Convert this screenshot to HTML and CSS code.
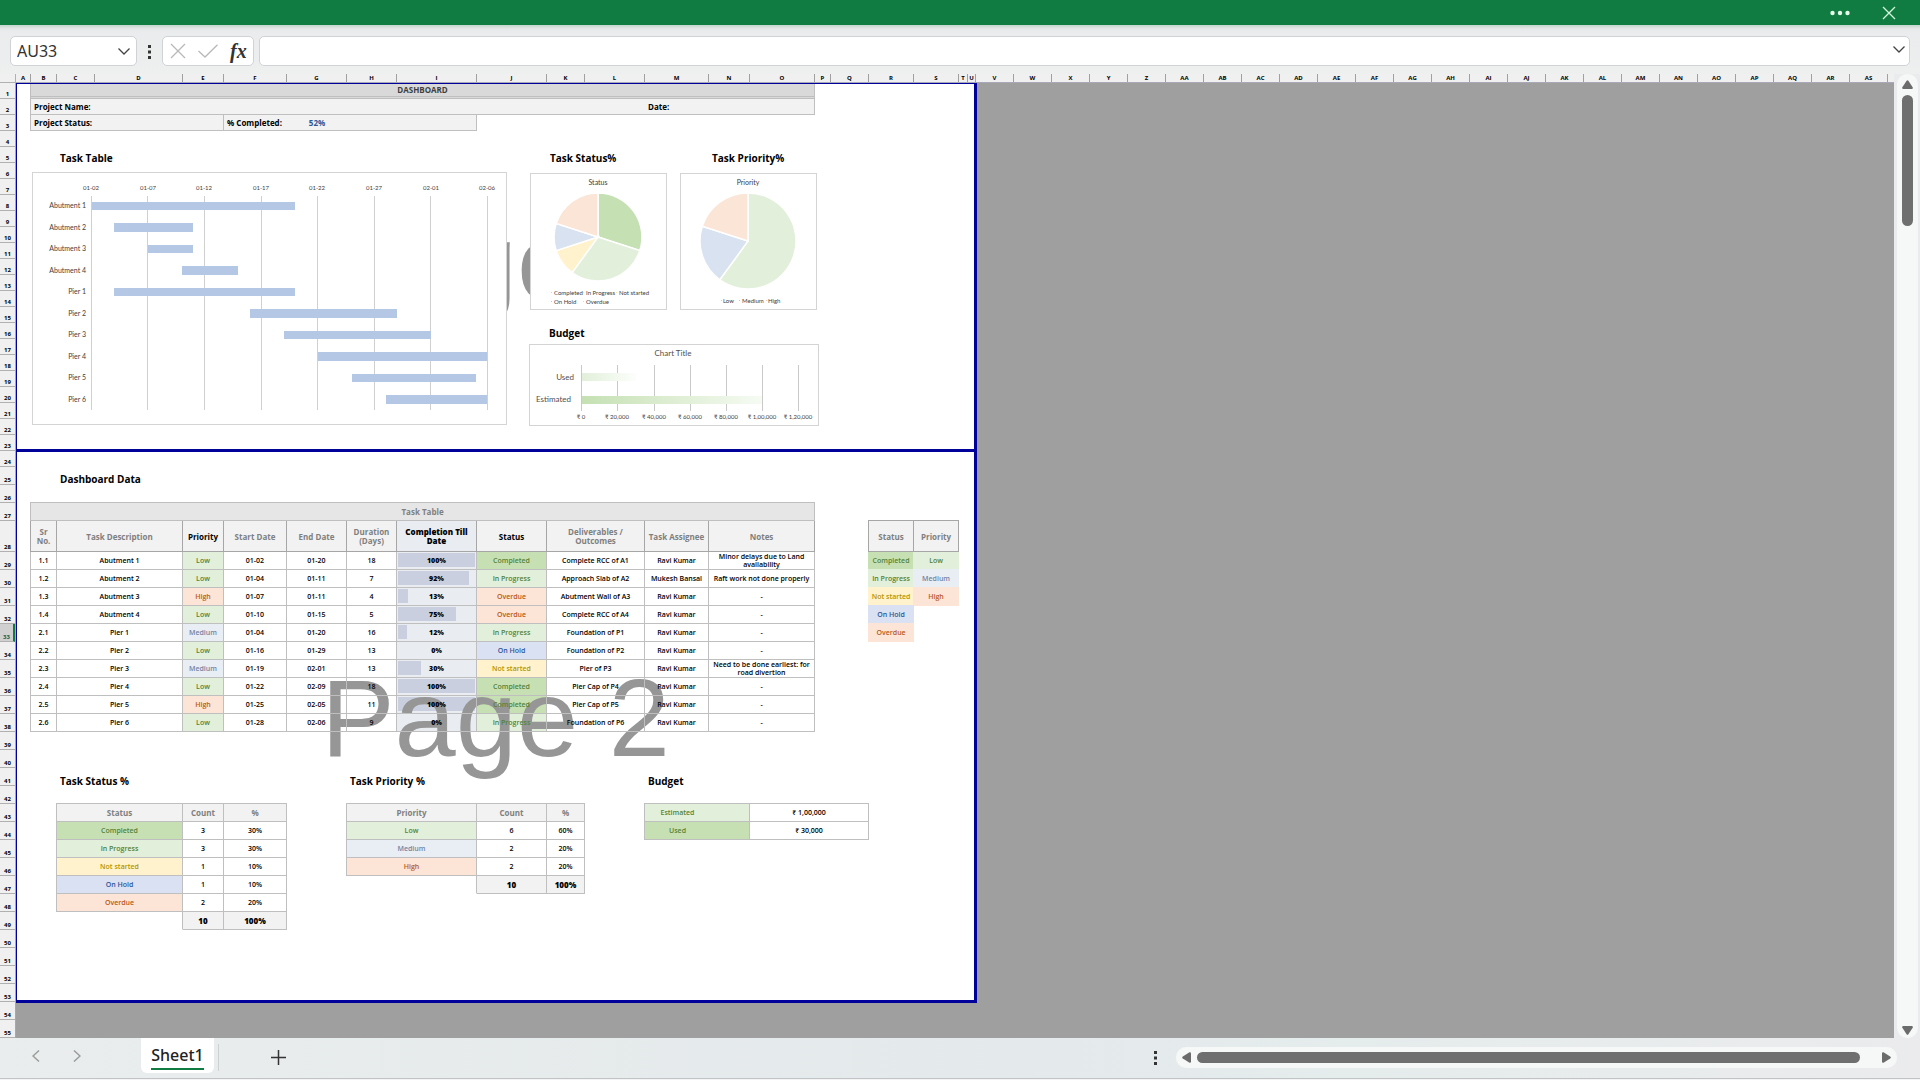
FILE: index.html
```html
<!DOCTYPE html>
<html lang="en">
<head>
    <meta charset="UTF-8">
    <meta name="viewport" content="width=device-width, initial-scale=1.0">
    <title>Project Dashboard</title>
    <link rel="stylesheet" href="styles.css">
</head>
<body>
    <header class="title-bar">
        <button aria-label="More options">
            <svg width="20" height="6" viewBox="0 0 20 6" fill="#e4fbe9"><circle cx="2.5" cy="3" r="2.2"/><circle cx="10" cy="3" r="2.2"/><circle cx="17.500" cy="3" r="2.2"/></svg>
        </button>
        <button aria-label="Close">
            <svg width="14" height="14" viewBox="0 0 14 14" fill="none" stroke="#d5f7df" stroke-width="1.3"><path d="M1 1l12 12M13 1L1 13"/></svg>
        </button>
    </header>

    <!-- Formula bar -->
    <div class="formula-bar">
        <div class="box name-box">
            <input type="text" value="AU33" aria-label="Name box">
            <button aria-label="Open name list">
                <svg width="12" height="7" viewBox="0 0 12 7" fill="none" stroke="#444" stroke-width="1.3"><path d="M.5.5L6 6 11.500.5"/></svg>
            </button>
        </div>
        <svg class="grip" width="4" height="14" viewBox="0 0 4 14" fill="#333"><path d="M0 0h3v3H0zM0 5.500h3v3H0zM0 11h3v3H0z"/></svg>
        <div class="box fx-box">
            <button aria-label="Cancel">
                <svg width="16" height="16" viewBox="0 0 16 16" fill="none" stroke="#b9b9b9" stroke-width="1.3"><path d="M1 1l14 14M15 1L1 15"/></svg>
            </button>
            <button aria-label="Enter">
                <svg width="20" height="14" viewBox="0 0 20 14" fill="none" stroke="#b9b9b9" stroke-width="1.300"><path d="M.5 7L7 13 19.500.8"/></svg>
            </button>
            <button class="fx" aria-label="Insert function">fx</button>
        </div>
        <div class="box formula-box">
            <input type="text" value="" aria-label="Formula">
            <button aria-label="Expand formula bar">
                <svg width="12" height="7" viewBox="0 0 12 7" fill="none" stroke="#444" stroke-width="1.3"><path d="M.5.5L6 6 11.500.5"/></svg>
            </button>
        </div>
    </div>

    <main class="workspace">
        <div class="sheet">
            <div class="corner"></div>
            <div class="col-heads" id="col-heads"></div>
            <div class="row-heads" id="row-heads"></div>

            <div class="canvas">
                <!-- Page 1: dashboard -->
                <section class="page page-one">
                    <div class="watermark">Page 1</div>
                    <table class="banner">
                        <colgroup><col style="width:194px"><col style="width:63px"><col style="width:60px"><col style="width:130px"><col style="width:168px"><col style="width:170px"></colgroup>
                        <tr><th colspan="6" class="banner-title">DASHBOARD</th></tr>
                        <tr><th colspan="5" class="open">Project Name:</th><th>Date:</th></tr>
                        <tr><th>Project Status:</th><th class="open">% Completed:</th><td class="open percent">52%</td><td></td></tr>
                    </table>

                    <div class="charts">
                        <div class="chart-col">
                            <h2 class="in-28">Task Table</h2>
                            <svg class="chart" width="475" height="253" viewBox="0 0 475 253">
                                <g fill="#d0d0d0">
                                    <path d="M59 24h1v214h-1zM115 24h1v214h-1zM172 24h1v214h-1zM229 24h1v214h-1zM285 24h1v214h-1zM342 24h1v214h-1zM398 24h1v214h-1zM455 24h1v214h-1z"/>
                                </g>
                                <g fill="#b4c7e4">
                                    <path d="M60 30h203v8H60zM82 51h79v9H82zM116 73h45v8h-45zM150 94h56v9h-56zM82 116h181v8H82zM218 137h147v9H218zM252 159h147v8H252zM286 180h169v9H286zM320 202h124v8H320zM354 223h101v9H354z"/>
                                </g>
                                <g class="axis" text-anchor="middle">
                                    <text x="59" y="18">01-02</text><text x="116" y="18">01-07</text><text x="172" y="18">01-12</text><text x="229" y="18">01-17</text><text x="285" y="18">01-22</text><text x="342" y="18">01-27</text><text x="399" y="18">02-01</text><text x="455" y="18">02-06</text>
                                </g>
                                <g class="axis cat" text-anchor="end">
                                    <text x="54" y="36">Abutment 1</text><text x="54" y="58">Abutment 2</text><text x="54" y="79">Abutment 3</text><text x="54" y="101">Abutment 4</text><text x="54" y="122">Pier 1</text><text x="54" y="144">Pier 2</text><text x="54" y="165">Pier 3</text><text x="54" y="187">Pier 4</text><text x="54" y="208">Pier 5</text><text x="54" y="230">Pier 6</text>
                                </g>
                            </svg>
                        </div>

                        <div class="chart-col">
                            <div class="pies">
                                <div>
                                    <h2 class="in-20">Task Status%</h2>
                                    <svg class="chart" width="137" height="137" viewBox="0 0 137 137">
                                        <text class="axis cat" x="68" y="12" text-anchor="middle">Status</text>
                                        <g transform="translate(68 64)" stroke="#fff" stroke-width="1.500">
                                            <path fill="#c5e0b3" d="M0 0V-44A44 44 0 0 1 41.800 13.600z"/>
                                            <path fill="#e2efda" d="M0 0L41.800 13.600A44 44 0 0 1-25.900 35.600z"/>
                                            <path fill="#fff2cc" d="M0 0L-25.900 35.600A44 44 0 0 1-41.800 13.600z"/>
                                            <path fill="#d9e2f1" d="M0 0L-41.800 13.600A44 44 0 0 1-41.800-13.600z"/>
                                            <path fill="#fbe5d7" d="M0 0L-41.800-13.600A44 44 0 0 1 0-44z"/>
                                        </g>
                                        <path fill="#c5e0b3" d="M21 119h1v1h-1z"/><path fill="#e2efda" d="M53 119h1v1h-1z"/><path fill="#ffe699" d="M86 119h1v1h-1z"/><path fill="#b4c7e4" d="M21 128h1v1h-1z"/><path fill="#f8cbad" d="M53 128h1v1h-1z"/>
                                        <g class="axis">
                                            <text x="24" y="122">Completed</text><text x="56" y="122">In Progress</text><text x="89" y="122">Not started</text><text x="24" y="131">On Hold</text><text x="56" y="131">Overdue</text>
                                        </g>
                                    </svg>
                                </div>
                                <div>
                                    <h2 class="in-32">Task Priority%</h2>
                                    <svg class="chart" width="137" height="137" viewBox="0 0 137 137">
                                        <text class="axis cat" x="68" y="12" text-anchor="middle">Priority</text>
                                        <g transform="translate(68 68)" stroke="#fff" stroke-width="1.500">
                                            <path fill="#e2efda" d="M0 0V-48A48 48 0 1 1-28.200 38.800z"/>
                                            <path fill="#d9e2f1" d="M0 0L-28.200 38.800A48 48 0 0 1-45.700-14.800z"/>
                                            <path fill="#fbe5d7" d="M0 0L-45.700-14.800A48 48 0 0 1 0-48z"/>
                                        </g>
                                        <path fill="#c5e0b3" d="M41 127h1v1h-1z"/><path fill="#b4c7e4" d="M59 127h1v1h-1z"/><path fill="#f8cbad" d="M86 127h1v1h-1z"/>
                                        <g class="axis">
                                            <text x="43" y="130">Low</text><text x="62" y="130">Medium</text><text x="88" y="130">High</text>
                                        </g>
                                    </svg>
                                </div>
                            </div>
                            <h2 class="in-20 budget-title">Budget</h2>
                            <svg class="chart" width="290" height="82" viewBox="0 0 290 82">
                                <defs>
                                    <linearGradient id="used"><stop offset="0" stop-color="#e2efda"/><stop offset="1" stop-color="#fcfefb"/></linearGradient>
                                    <linearGradient id="estimated"><stop offset="0" stop-color="#c5e0b3"/><stop offset="1" stop-color="#f6fbf3"/></linearGradient>
                                </defs>
                                <path fill="#c9c9c9" d="M52 21h1v46h-1zM88 21h1v46h-1zM125 21h1v46h-1zM161 21h1v46h-1zM197 21h1v46h-1zM233 21h1v46h-1zM269 21h1v46h-1z"/>
                                <path fill="url(#used)" d="M53 29h54v8H53z"/>
                                <path fill="url(#estimated)" d="M53 52h180v8H53z"/>
                                <g class="label">
                                    <text x="144" y="12" text-anchor="middle">Chart Title</text>
                                    <text x="45" y="36" text-anchor="end">Used</text>
                                    <text x="42" y="58" text-anchor="end">Estimated</text>
                                </g>
                                <g class="axis" text-anchor="middle">
                                    <text x="52" y="75">₹ 0</text><text x="88" y="75">₹ 20,000</text><text x="125" y="75">₹ 40,000</text><text x="161" y="75">₹ 60,000</text><text x="197" y="75">₹ 80,000</text><text x="233" y="75">₹ 1,00,000</text><text x="269" y="75">₹ 1,20,000</text>
                                </g>
                            </svg>
                        </div>
                    </div>
                </section>

                <!-- Page 2: source data -->
                <section class="page page-two">
                    <div class="watermark">Page 2</div>
                    <h2 class="data-title">Dashboard Data</h2>

                    <div class="data-row">
                        <table class="data">
                            <colgroup><col style="width:27px"><col style="width:126px"><col style="width:41px"><col style="width:63px"><col style="width:60px"><col style="width:50px"><col style="width:80px"><col style="width:70px"><col style="width:98px"><col style="width:64px"><col style="width:106px"></colgroup>
                            <thead>
                                <tr><th colspan="11" class="caption">Task Table</th></tr>
                                <tr class="tall"><th>Sr<br>No.</th><th>Task Description</th><th class="strong">Priority</th><th>Start Date</th><th>End Date</th><th>Duration<br>(Days)</th><th class="strong done">Completion Till Date</th><th class="strong">Status</th><th>Deliverables /<br>Outcomes</th><th>Task Assignee</th><th>Notes</th></tr>
                            </thead>
                            <tbody>
                                <tr><td>1.1</td><td>Abutment 1</td><td class="low">Low</td><td>01-02</td><td>01-20</td><td>18</td><td class="done"><i class="bar" style="--value:100"></i>100%</td><td class="completed">Completed</td><td>Complete RCC of A1</td><td>Ravi Kumar</td><td>Minor delays due to Land availability</td></tr>
                                <tr><td>1.2</td><td>Abutment 2</td><td class="low">Low</td><td>01-04</td><td>01-11</td><td>7</td><td class="done"><i class="bar" style="--value:92"></i>92%</td><td class="progress">In Progress</td><td>Approach Slab of A2</td><td>Mukesh Bansal</td><td>Raft work not done properly</td></tr>
                                <tr><td>1.3</td><td>Abutment 3</td><td class="high">High</td><td>01-07</td><td>01-11</td><td>4</td><td class="done"><i class="bar" style="--value:13"></i>13%</td><td class="overdue">Overdue</td><td>Abutment Wall of A3</td><td>Ravi Kumar</td><td>-</td></tr>
                                <tr><td>1.4</td><td>Abutment 4</td><td class="low">Low</td><td>01-10</td><td>01-15</td><td>5</td><td class="done"><i class="bar" style="--value:75"></i>75%</td><td class="overdue">Overdue</td><td>Complete RCC of A4</td><td>Ravi kumar</td><td>-</td></tr>
                                <tr><td>2.1</td><td>Pier 1</td><td class="medium">Medium</td><td>01-04</td><td>01-20</td><td>16</td><td class="done"><i class="bar" style="--value:12"></i>12%</td><td class="progress">In Progress</td><td>Foundation of P1</td><td>Ravi Kumar</td><td>-</td></tr>
                                <tr><td>2.2</td><td>Pier 2</td><td class="low">Low</td><td>01-16</td><td>01-29</td><td>13</td><td class="done">0%</td><td class="hold">On Hold</td><td>Foundation of P2</td><td>Ravi Kumar</td><td>-</td></tr>
                                <tr><td>2.3</td><td>Pier 3</td><td class="medium">Medium</td><td>01-19</td><td>02-01</td><td>13</td><td class="done"><i class="bar" style="--value:30"></i>30%</td><td class="not-started">Not started</td><td>Pier of P3</td><td>Ravi Kumar</td><td>Need to be done earliest: for road divertion</td></tr>
                                <tr><td>2.4</td><td>Pier 4</td><td class="low">Low</td><td>01-22</td><td>02-09</td><td>18</td><td class="done"><i class="bar" style="--value:100"></i>100%</td><td class="completed">Completed</td><td>Pier Cap of P4</td><td>Ravi Kumar</td><td>-</td></tr>
                                <tr><td>2.5</td><td>Pier 5</td><td class="high">High</td><td>01-25</td><td>02-05</td><td>11</td><td class="done"><i class="bar" style="--value:100"></i>100%</td><td class="completed">Completed</td><td>Pier Cap of P5</td><td>Ravi Kumar</td><td>-</td></tr>
                                <tr><td>2.6</td><td>Pier 6</td><td class="low">Low</td><td>01-28</td><td>02-06</td><td>9</td><td class="done">0%</td><td class="progress">In Progress</td><td>Foundation of P6</td><td>Ravi Kumar</td><td>-</td></tr>
                            </tbody>
                        </table>

                        <table class="data key">
                            <colgroup><col style="width:46px"><col style="width:45px"></colgroup>
                            <thead>
                                <tr class="tall"><th>Status</th><th>Priority</th></tr>
                            </thead>
                            <tbody>
                                <tr><td class="completed">Completed</td><td class="low">Low</td></tr>
                                <tr><td class="progress">In Progress</td><td class="medium">Medium</td></tr>
                                <tr><td class="not-started">Not started</td><td class="high">High</td></tr>
                                <tr><td class="hold">On Hold</td><td></td></tr>
                                <tr><td class="overdue">Overdue</td><td></td></tr>
                            </tbody>
                        </table>
                    </div>

                    <div class="summary-row">
                        <div class="summary">
                            <h2>Task Status %</h2>
                            <table class="data">
                                <colgroup><col style="width:127px"><col style="width:41px"><col style="width:63px"></colgroup>
                                <thead><tr><th>Status</th><th>Count</th><th>%</th></tr></thead>
                                <tbody>
                                    <tr><td class="completed">Completed</td><td>3</td><td>30%</td></tr>
                                    <tr><td class="progress">In Progress</td><td>3</td><td>30%</td></tr>
                                    <tr><td class="not-started">Not started</td><td>1</td><td>10%</td></tr>
                                    <tr><td class="hold">On Hold</td><td>1</td><td>10%</td></tr>
                                    <tr><td class="overdue">Overdue</td><td>2</td><td>20%</td></tr>
                                    <tr class="total"><td class="blank"></td><td>10</td><td>100%</td></tr>
                                </tbody>
                            </table>
                        </div>
                        <div class="summary">
                            <h2>Task Priority %</h2>
                            <table class="data">
                                <colgroup><col style="width:131px"><col style="width:70px"><col style="width:38px"></colgroup>
                                <thead><tr><th>Priority</th><th>Count</th><th>%</th></tr></thead>
                                <tbody>
                                    <tr><td class="low">Low</td><td>6</td><td>60%</td></tr>
                                    <tr><td class="medium">Medium</td><td>2</td><td>20%</td></tr>
                                    <tr><td class="high">High</td><td>2</td><td>20%</td></tr>
                                    <tr class="total"><td class="blank"></td><td>10</td><td>100%</td></tr>
                                </tbody>
                            </table>
                        </div>
                        <div class="summary">
                            <h2>Budget</h2>
                            <table class="data budget">
                                <colgroup><col style="width:106px"><col style="width:119px"></colgroup>
                                <tbody>
                                    <tr><td class="progress">Estimated</td><td>₹ 1,00,000</td></tr>
                                    <tr><td class="completed">Used</td><td>₹ 30,000</td></tr>
                                </tbody>
                            </table>
                        </div>
                    </div>
                </section>
            </div>
        </div>

        <div class="scroll-side">
            <div class="track vertical">
                <svg width="11" height="9" viewBox="0 0 11 9" fill="#6b6b6b"><path d="M4.600.8a1.100 1.100 0 0 1 1.800 0L10.800 7.500Q11 9 9.800 9H1.200Q0 9 .2 7.500z"/></svg>
                <div class="thumb"></div>
                <svg class="last" width="11" height="9" viewBox="0 0 11 9" fill="#6b6b6b"><path d="M4.600 8.200a1.100 1.100 0 0 0 1.800 0L10.800 1.500Q11 0 9.800 0H1.200Q0 0 .2 1.500z"/></svg>
            </div>
        </div>
    </main>

    <footer class="tab-bar">
        <button class="nav" aria-label="Previous sheet">
            <svg width="8" height="12" viewBox="0 0 8 12" fill="none" stroke="#9a9a9a" stroke-width="1.4"><path d="M7 .5L1 6l6 5.500"/></svg>
        </button>
        <button class="nav" aria-label="Next sheet">
            <svg width="8" height="12" viewBox="0 0 8 12" fill="none" stroke="#9a9a9a" stroke-width="1.4"><path d="M1 .5L7 6l-6 5.500"/></svg>
        </button>
        <button class="tab"><span>Sheet1</span></button>
        <button class="add" aria-label="New sheet">
            <svg width="15" height="15" viewBox="0 0 15 15" fill="none" stroke="#333" stroke-width="1.500"><path d="M7.500 0v15M0 7.500h15"/></svg>
        </button>
        <svg class="grip" width="4" height="14" viewBox="0 0 4 14" fill="#333"><path d="M0 0h3v3H0zM0 5.500h3v3H0zM0 11h3v3H0z"/></svg>
        <div class="track horizontal">
            <svg width="9" height="11" viewBox="0 0 9 11" fill="#6b6b6b"><path d="M.8 4.600a1.100 1.100 0 0 0 0 1.800L7.500 10.800Q9 11 9 9.800V1.200Q9 0 7.500.2z"/></svg>
            <div class="thumb"></div>
            <svg class="last" width="9" height="11" viewBox="0 0 9 11" fill="#6b6b6b"><path d="M8.200 4.600a1.100 1.100 0 0 1 0 1.800L1.500 10.800Q0 11 0 9.800V1.200Q0 0 1.500.2z"/></svg>
        </div>
    </footer>

    <script src="headings.js"></script>
</body>
</html>
```

FILE: styles.css
```css
* {
    box-sizing: border-box;
}
body {
    margin: 0;
    height: 100vh;
    display: flex;
    flex-direction: column;
    overflow: hidden;
    background: #e9ebec;
    border-bottom: 1px solid #f4f4f4;
    font-family: "Open Sans", "Noto Sans", sans-serif;
    color: #000;
}
button {
    display: flex;
    align-items: center;
    justify-content: center;
    padding: 0;
    border: none;
    background: none;
    font-family: inherit;
    cursor: pointer;
}
input {
    flex: 1;
    min-width: 0;
    padding: 0;
    border: none;
    outline: none;
    background: none;
    font: 16px "Noto Sans", sans-serif;
    color: #333;
}
h2 {
    margin: 0;
    font-size: 10px;
    line-height: 18px;
    font-weight: 700;
}

/* Title bar */
.title-bar {
    height: 25px;
    flex: none;
    display: flex;
    justify-content: flex-end;
    align-items: center;
    gap: 32px;
    padding-right: 24px;
    background: #107c41;
}

/* Formula bar */
.formula-bar {
    flex: none;
    height: 49px;
    display: flex;
    align-items: flex-start;
    padding: 11px 10px 0;
    background: linear-gradient(#c3d6cc, #e7e9ea 4px, #eaeced 8px, #eeefef);
}
.box {
    height: 30px;
    display: flex;
    align-items: center;
    background: #fff;
    border: 1px solid #d0d3d6;
    border-radius: 5px;
}
.name-box {
    width: 127px;
    padding: 0 6px;
}
.formula-bar .grip {
    margin: 9px 10px 0 11px;
}
.fx-box {
    width: 92px;
    padding: 0 6px 0 7px;
    gap: 12px;
}
.fx {
    font: italic 700 20px/24px "Liberation Serif", serif;
    color: #333;
}
.formula-box {
    flex: 1;
    margin-left: 5px;
    padding: 0 4px;
}
.formula-box button {
    margin-bottom: 3px;
}

/* Sheet */
.workspace {
    flex: 1;
    min-height: 0;
    display: flex;
}
.sheet {
    flex: 1;
    min-width: 0;
    display: grid;
    grid-template-columns: 16px 1fr;
    grid-template-rows: 9px 1fr;
    overflow: hidden;
}
.corner, .col-heads, .row-heads {
    background: #f0f0f0;
    font: 700 6px/8px "Open Sans", sans-serif;
}
.corner {
    border-right: 1px solid #b0b0b0;
    border-bottom: 1px solid #b0b0b0;
}
.col-heads {
    display: flex;
    min-width: 0;
    overflow: hidden;
    border-bottom: 1px solid #a8a8b8;
}
.col-heads span {
    flex: none;
    border-right: 1px solid #a0a0a0;
    text-align: center;
}
.row-heads {
    min-height: 0;
    overflow: hidden;
    border-right: 1px solid #a8a8a8;
}
.row-heads span {
    display: flex;
    align-items: flex-end;
    justify-content: center;
    border-bottom: 1px solid #b0b0b0;
}
.row-heads .active {
    background: #d0d0d0;
    border-right: 2px solid #107c41;
    color: #1f5a3c;
}
.canvas {
    min-width: 0;
    min-height: 0;
    overflow: hidden;
    background: #9f9f9f;
}
.page {
    position: relative;
    isolation: isolate;
    width: 961px;
    padding-left: 13px;
    background: #fff;
    border: solid #00009a;
    border-width: 0 3px 3px 1px;
}
.page-one {
    height: 369px;
    border-top-width: 1px;
}
.page-two {
    height: 551px;
}
.watermark {
    position: absolute;
    inset: 0;
    z-index: -1;
    display: flex;
    align-items: center;
    justify-content: center;
    padding-bottom: 18px;
    font: 110px "Liberation Sans", Arial, sans-serif;
    color: #969696;
}
.page-one .watermark {
    padding-bottom: 10px;
}

/* Banner */
.banner {
    width: 785px;
    table-layout: fixed;
    border-collapse: separate;
    border-spacing: 0;
    font-size: 8px;
    line-height: 10px;
}
.banner th, .banner td {
    height: 16px;
    padding: 0 3px;
    background: #f2f2f2;
    border: solid #bfbfbf;
    border-width: 0 1px 1px 0;
    font-weight: 700;
    text-align: left;
}
.banner tr > :first-child {
    border-left-width: 1px;
}
.banner .open {
    border-right-width: 0;
}
.banner .banner-title {
    height: 15px;
    background: #d9d9d9;
    border-bottom: 3px double #bfbfbf;
    color: #404040;
    text-align: center;
}
.banner .percent {
    color: #2f5597;
    text-align: center;
}

/* Charts */
.charts {
    display: flex;
    gap: 22px;
    margin: 18px 0 0 2px;
}
.chart {
    display: block;
    margin-top: 5px;
    background: #fff;
    outline: 1px solid #d4d4d4;
    outline-offset: -1px;
}
.pies {
    display: flex;
    gap: 13px;
    padding-left: 1px;
}
.pies .chart {
    margin-top: 6px;
}
.in-20 {
    padding-left: 20px;
}
.in-28 {
    padding-left: 28px;
}
.in-32 {
    padding-left: 32px;
}
.budget-title {
    margin-top: 14px;
}
.budget-title + .chart {
    margin-top: 2px;
}
.axis {
    font: 6px Lato, sans-serif;
    fill: #404040;
}
.cat {
    font-size: 7px;
}
.label {
    font: 8px Lato, sans-serif;
    fill: #505050;
}

/* Data tables */
.data-title {
    padding: 18px 0 14px 30px;
}
.data-row {
    display: flex;
    align-items: flex-start;
    gap: 53px;
}
.data {
    table-layout: fixed;
    border-collapse: separate;
    border-spacing: 0;
    font-size: 7px;
    line-height: 8px;
    font-weight: 600;
    text-align: center;
}
.data-row .data:first-child {
    width: 785px;
}
.data th, .data td {
    position: relative;
    height: 18px;
    padding: 0 2px;
    border: solid #bfbfbf;
    border-width: 0 1px 1px 0;
}
.data tr > :first-child {
    border-left-width: 1px;
}
.data > :nth-child(2) > tr:first-child > * {
    border-top-width: 1px;
    height: 19px;
}
.data th {
    --fill: #f2f2f2;
    font-size: 8px;
    line-height: 9px;
    font-weight: 700;
    color: #808080;
}
.data .strong {
    color: #000;
}
.data .caption {
    --fill: #e7e6e6;
}
.data .tall th {
    height: 31px;
    border-color: #a6a6a6;
}
/* fills sit under the watermark, text and grid lines over it */
.data th::before, .data td::before {
    content: "";
    position: absolute;
    inset: 0;
    z-index: -2;
    background: var(--fill, transparent);
}
.data .done {
    --fill: #e9edf2;
    font-weight: 800;
}
.bar {
    position: absolute;
    z-index: -2;
    top: 1px;
    bottom: 2px;
    left: 1px;
    width: calc((100% - 2px) * var(--value) / 100);
    background: #c9cfde;
}
.data .low, .data .progress {
    --fill: #e2efda;
    color: #548235;
}
.data .completed {
    --fill: #c6e0b4;
    color: #548235;
}
.data .medium {
    --fill: #e9edf4;
    color: #7384a3;
}
.data .high, .data .overdue {
    --fill: #fce4d6;
    color: #b85a18;
}
.data .not-started {
    --fill: #fff2cc;
    color: #b39500;
}
.data .hold {
    --fill: #d9e1f2;
    color: #2f5597;
}
.key {
    width: 91px;
    margin-top: 18px;
}
.data.key > thead > .tall > th {
    height: 32px;
}
.key td {
    border-color: transparent;
}
.key td::before {
    inset: -1px;
}
.summary-row {
    display: flex;
    align-items: flex-start;
    gap: 59px;
    margin: 40px 0 0 26px;
}
.summary h2 {
    padding: 0 0 13px 4px;
}
.total td {
    --fill: #f2f2f2;
    font-size: 8px;
    font-weight: 800;
}
.data .blank {
    --fill: transparent;
    border-left-color: transparent;
    border-bottom-color: transparent;
}
.budget td:first-child {
    padding-right: 41px;
}

/* Scroll bars */
.scroll-side {
    width: 26px;
    flex: none;
    padding: 0 2px 0 3px;
}
.track {
    display: flex;
    align-items: center;
    background: #f6f7f7;
    border-radius: 10px;
}
.vertical {
    flex-direction: column;
    height: 100%;
    padding: 6px 0 3px;
}
.vertical .last {
    margin-top: auto;
}
.horizontal .last {
    margin-left: auto;
}
.vertical .thumb {
    width: 11px;
    height: 131px;
    margin-top: 6px;
}
.thumb {
    background: #6f6f6f;
    border-radius: 6px;
}

/* Tab bar */
.tab-bar {
    flex: none;
    height: 41px;
    display: flex;
    align-items: flex-start;
    padding: 0 23px 0 32px;
    background: linear-gradient(90deg, #e9eded, #e4e9eb 50%, #e5ecec 70%, #ebebed);
    border-bottom: 1px solid #c0c4c6;
}
.nav {
    width: 8px;
    height: 36px;
    margin-right: 33px;
}
.tab {
    width: 73px;
    height: 35px;
    margin-left: 27px;
    align-items: flex-start;
    background: #fff;
    border-radius: 0 0 6px 6px;
    font: 500 16px/24px "Noto Sans", sans-serif;
    color: #222;
}
.tab span {
    padding: 5px 0 1px;
    border-bottom: 2px solid #107c41;
}
.add {
    height: 27px;
    margin: 6px 0 0 4px;
    padding-left: 52px;
    border-left: 1px solid #cdd1d4;
}
.tab-bar .grip {
    margin: 13px 18px 0 auto;
}
.horizontal {
    width: 721px;
    height: 21px;
    margin-top: 9px;
    padding: 0 6px;
}
.horizontal .thumb {
    width: 663px;
    height: 11px;
    margin-left: 6px;
}
```

FILE: headings.js
```js
// column widths A..U, every later column uses the default
const widths = [15, 26, 38, 88, 41, 63, 60, 50, 80, 70, 38, 60, 64, 41, 65, 16, 38, 45, 45, 9, 8];
const defaultWidth = 38;
const columnCount = 45;
const rowCount = 55;
const activeRow = 33;

function columnName(i) {
    const letter = String.fromCharCode(65 + i % 26);
    return i < 26 ? letter : 'A' + letter;
}

function rowHeight(row) {
    if (row === 28) return 31;
    return row <= 24 ? 16 : 18;
}

const colHeads = document.getElementById('col-heads');
for (let i = 0; i < columnCount; i++) {
    const cell = document.createElement('span');
    cell.textContent = columnName(i);
    cell.style.width = (widths[i] || defaultWidth) + 'px';
    colHeads.appendChild(cell);
}

const rowHeads = document.getElementById('row-heads');
for (let row = 1; row <= rowCount; row++) {
    const cell = document.createElement('span');
    cell.textContent = row;
    cell.style.height = rowHeight(row) + 'px';
    if (row === activeRow) cell.className = 'active';
    rowHeads.appendChild(cell);
}
```
